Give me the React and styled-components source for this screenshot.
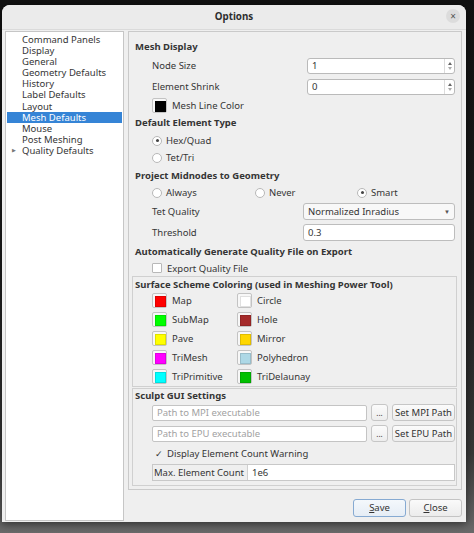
import React from 'react';
import styled, { createGlobalStyle } from 'styled-components';

const GlobalStyle = createGlobalStyle`
	html, body {
		margin: 0;
		padding: 0;
		background: #141414;
	}
	body {
		font-family: "Noto Sans", "Open Sans", sans-serif;
		font-size: 9.5px;
		color: #353535;
	}
	* {
		box-sizing: border-box;
	}
`;

const Backdrop = styled.div`
	width: 474px;
	height: 533px;
	padding: 5px 8px 11px 2px;
	display: flex;
	background: linear-gradient(180deg, #111 0%, #1d1d1d 50%, #383838 85%, #6a6a6a 100%);
`;

const Window = styled.div`
	flex: 1;
	display: flex;
	flex-direction: column;
	background: #efefef;
	border-radius: 8px 8px 0 0;
	overflow: hidden;
	box-shadow: 0 2px 8px rgba(0, 0, 0, 0.5);
`;

const TitleBar = styled.div`
	height: 25px;
	display: grid;
	grid-template-columns: 1fr auto 1fr;
	align-items: center;
	background: #ebebeb;
	border-bottom: 1px solid #dadada;
	padding: 0 6px;
`;

const Title = styled.div`
	font-weight: bold;
	font-size: 9.8px;
	color: #2e2e2e;
	margin-top: -1px;
`;

const CloseBtn = styled.div`
	justify-self: end;
	width: 14px;
	height: 14px;
	margin-top: -2px;
	border-radius: 50%;
	background: #dcdcdc;
	color: #555;
	font-size: 10px;
	line-height: 14px;
	text-align: center;
`;

const Body = styled.div`
	flex: 1;
	display: flex;
	gap: 4px;
	padding: 1px 4px 1px 3px;
`;

const Tree = styled.div`
	width: 119px;
	background: #fff;
	border: 1px solid #c6c6c6;
	padding: 2px 1px 1px;
`;

const TreeItem = styled.div`
	position: relative;
	height: 11.1px;
	line-height: 11px;
	padding-left: 15px;
	white-space: nowrap;
	color: ${(p) => (p.$selected ? '#fff' : '#353535')};
	background: ${(p) => (p.$selected ? '#3584d6' : 'transparent')};
`;

const Caret = styled.span`
	position: absolute;
	left: 5px;
	font-size: 5px;
	color: #777;
`;

const Main = styled.div`
	flex: 1;
	display: flex;
	flex-direction: column;
`;

const Frame = styled.div`
	height: 459px;
	border: 1px solid #cacaca;
	padding: 5px 4px 0 3px;
	display: flex;
	flex-direction: column;
`;

const Heading = styled.div`
	height: ${(p) => p.$h || 18}px;
	display: flex;
	align-items: center;
	padding-left: 3px;
	font-weight: bold;
	white-space: nowrap;
`;

const Row = styled.div`
	height: ${(p) => p.$h || 17}px;
	display: flex;
	align-items: center;
	padding-left: ${(p) => (p.$pl ?? 20)}px;
	padding-right: ${(p) => p.$pr || 0}px;
	gap: ${(p) => p.$gap || 0}px;
	white-space: nowrap;
`;

const Label = styled.div`
	flex: 1;
`;

const SpinBox = styled.div`
	width: 148px;
	height: 16px;
	display: flex;
	background: #fff;
	border: 1px solid #bababa;
	border-radius: 3px;
	margin-right: 2px;
`;

const Value = styled.div`
	flex: 1;
	padding-left: 4px;
	line-height: 14px;
	color: ${(p) => (p.$placeholder ? '#a2a2a2' : '#333')};
`;

const SpinArrows = styled.div`
	width: 10px;
	border-left: 1px solid #dcdcdc;
	display: flex;
	flex-direction: column;
	align-items: center;
	justify-content: center;
	gap: 2px;
`;

const Tri = styled.span`
	width: 0;
	height: 0;
	border-left: 2.5px solid transparent;
	border-right: 2.5px solid transparent;
	border-${(p) => (p.$up ? 'bottom' : 'top')}: 3px solid ${(p) => (p.$up ? '#666' : '#aaa')};
`;

const Swatch = styled.div`
	width: 15px;
	height: 15px;
	padding: 2px;
	border: 1px solid #c3c3c3;
	border-radius: 2px;
	background: #f7f7f7;
	margin-right: 5px;
	flex-shrink: 0;
	&::after {
		content: '';
		display: block;
		width: 100%;
		height: 100%;
		background: ${(p) => p.$color};
		border: 1px solid rgba(0, 0, 0, 0.12);
	}
`;

const RadioCircle = styled.span`
	width: 10px;
	height: 10px;
	border-radius: 50%;
	border: 1px solid #b8b8b8;
	background: #fff;
	margin-right: 4px;
	display: inline-flex;
	align-items: center;
	justify-content: center;
	flex-shrink: 0;
	&::after {
		content: '';
		width: 3px;
		height: 3px;
		border-radius: 50%;
		background: ${(p) => (p.$on ? '#444' : 'transparent')};
	}
`;

const RadioCell = styled.div`
	width: ${(p) => p.$w || 'auto'};
	display: flex;
	align-items: center;
`;

const CheckBox = styled.span`
	width: 10px;
	height: 10px;
	border: 1px solid #b8b8b8;
	background: #fff;
	border-radius: 1px;
	margin-right: 5px;
	flex-shrink: 0;
`;

const Tick = styled.span`
	font-size: 9px;
	margin: 0 4px 0 3px;
	color: #333;
`;

const Field = styled.div`
	width: 152px;
	height: 17px;
	display: flex;
	align-items: center;
	background: ${(p) => (p.$combo ? '#f8f8f8' : '#fff')};
	border: 1px solid #bdbdbd;
	border-radius: 3px;
	margin-right: 2px;
	padding: 0 4px;
`;

const ComboArrow = styled.span`
	font-size: 6px;
	color: #555;
`;

const Group = styled.div`
	border: 1px solid #d0d0d0;
	margin-top: ${(p) => p.$mt || 0}px;
	padding-bottom: ${(p) => p.$pb || 0}px;
`;

const GroupTitle = styled.div`
	height: ${(p) => p.$h || 14}px;
	display: flex;
	align-items: center;
	padding-left: 2px;
	font-weight: bold;
	white-space: nowrap;
`;

const SchemeGrid = styled.div`
	display: grid;
	grid-template-columns: 85px 85px;
	grid-auto-rows: 19px;
	padding-left: 19px;
`;

const SchemeItem = styled.div`
	display: flex;
	align-items: center;
`;

const PathInput = styled.div`
	flex: 1;
	height: 16px;
	background: #fff;
	border: 1px solid #c4c4c4;
	border-radius: 2px;
	display: flex;
	align-items: center;
`;

const PushButton = styled.div`
	width: ${(p) => p.$w}px;
	height: 17px;
	display: flex;
	align-items: center;
	justify-content: center;
	border: 1px solid #c6c6c6;
	border-radius: 3px;
	background: linear-gradient(180deg, #fbfbfb, #ededed);
	color: #333;
	font-size: ${(p) => (p.$small ? 8 : 9.5)}px;
`;

const CountBox = styled.div`
	flex: 1;
	height: 17px;
	display: flex;
	align-items: stretch;
	border: 1px solid #c8c8c8;
	margin-right: 1px;
`;

const CountLabel = styled.div`
	width: 94px;
	padding-left: 1px;
	display: flex;
	align-items: center;
`;

const CountInput = styled.div`
	flex: 1;
	background: #fff;
	border-left: 1px solid #d0d0d0;
	padding-left: 4px;
	display: flex;
	align-items: center;
`;

const Footer = styled.div`
	flex: 1;
	display: flex;
	justify-content: flex-end;
	align-items: center;
	gap: 3px;
	padding-top: 4px;
`;

const DialogButton = styled.div`
	width: 53px;
	height: 18px;
	display: flex;
	align-items: center;
	justify-content: center;
	border: 1px solid ${(p) => (p.$default ? '#86aad2' : '#c4c4c4')};
	border-radius: 3px;
	background: ${(p) =>
		p.$default ? 'linear-gradient(180deg, #f4f8fc, #e6edf5)' : 'linear-gradient(180deg, #fafafa, #ececec)'};
	color: #333;
`;

const treeItems = [
	'Command Panels',
	'Display',
	'General',
	'Geometry Defaults',
	'History',
	'Label Defaults',
	'Layout',
	'Mesh Defaults',
	'Mouse',
	'Post Meshing',
	'Quality Defaults',
];

const schemes = [
	['Map', '#ff0000'],
	['Circle', '#ffffff'],
	['SubMap', '#00ff00'],
	['Hole', '#a52a2a'],
	['Pave', '#ffff00'],
	['Mirror', '#ffd700'],
	['TriMesh', '#ff00ff'],
	['Polyhedron', '#add8e6'],
	['TriPrimitive', '#00ffff'],
	['TriDelaunay', '#00c000'],
];

const Spin = ({ value }) => (
	<SpinBox>
		<Value>{value}</Value>
		<SpinArrows>
			<Tri $up />
			<Tri />
		</SpinArrows>
	</SpinBox>
);

const Radio = ({ on, label, w }) => (
	<RadioCell $w={w}>
		<RadioCircle $on={on} />
		{label}
	</RadioCell>
);

const App = () => {
	return (
		<Backdrop>
			<GlobalStyle />
			<Window>
				<TitleBar>
					<span />
					<Title>Options</Title>
					<CloseBtn>×</CloseBtn>
				</TitleBar>
				<Body>
					<Tree>
						{treeItems.map((item) => (
							<TreeItem key={item} $selected={item === 'Mesh Defaults'}>
								{item === 'Quality Defaults' && <Caret>▶</Caret>}
								{item}
							</TreeItem>
						))}
					</Tree>
					<Main>
						<Frame>
							<Heading>Mesh Display</Heading>
							<Row $h={21}>
								<Label>Node Size</Label>
								<Spin value="1" />
							</Row>
							<Row $h={21}>
								<Label>Element Shrink</Label>
								<Spin value="0" />
							</Row>
							<Row $h={16}>
								<Swatch $color="#000" />
								Mesh Line Color
							</Row>
							<Heading $h={19}>Default Element Type</Heading>
							<Row>
								<Radio on label="Hex/Quad" />
							</Row>
							<Row>
								<Radio label="Tet/Tri" />
							</Row>
							<Heading>Project Midnodes to Geometry</Heading>
							<Row>
								<Radio w="103px" label="Always" />
								<Radio w="102px" label="Never" />
								<Radio on label="Smart" />
							</Row>
							<Row $h={21}>
								<Label>Tet Quality</Label>
								<Field $combo>
									<Label>Normalized Inradius</Label>
									<ComboArrow>▼</ComboArrow>
								</Field>
							</Row>
							<Row $h={21}>
								<Label>Threshold</Label>
								<Field>0.3</Field>
							</Row>
							<Heading $h={17}>Automatically Generate Quality File on Export</Heading>
							<Row $h={16}>
								<CheckBox />
								Export Quality File
							</Row>
							<Group>
								<GroupTitle>Surface Scheme Coloring (used in Meshing Power Tool)</GroupTitle>
								<SchemeGrid>
									{schemes.map(([name, color]) => (
										<SchemeItem key={name}>
											<Swatch $color={color} />
											{name}
										</SchemeItem>
									))}
								</SchemeGrid>
							</Group>
							<Group $mt={1} $pb={3}>
								<GroupTitle $h={13}>Sculpt GUI Settings</GroupTitle>
								<Row $h={21} $pl={19} $pr={1} $gap={4}>
									<PathInput>
										<Value $placeholder>Path to MPI executable</Value>
									</PathInput>
									<PushButton $w={17} $small>
										...
									</PushButton>
									<PushButton $w={63}>Set MPI Path</PushButton>
								</Row>
								<Row $h={21} $pl={19} $pr={1} $gap={4}>
									<PathInput>
										<Value $placeholder>Path to EPU executable</Value>
									</PathInput>
									<PushButton $w={17} $small>
										...
									</PushButton>
									<PushButton $w={63}>Set EPU Path</PushButton>
								</Row>
								<Row $h={19} $pl={19}>
									<Tick>✓</Tick>
									Display Element Count Warning
								</Row>
								<Row $h={19} $pl={19}>
									<CountBox>
										<CountLabel>Max. Element Count</CountLabel>
										<CountInput>1e6</CountInput>
									</CountBox>
								</Row>
							</Group>
						</Frame>
						<Footer>
							<DialogButton $default>
								<span>
									<u>S</u>ave
								</span>
							</DialogButton>
							<DialogButton>
								<span>
									<u>C</u>lose
								</span>
							</DialogButton>
						</Footer>
					</Main>
				</Body>
			</Window>
		</Backdrop>
	);
};

export default App;
